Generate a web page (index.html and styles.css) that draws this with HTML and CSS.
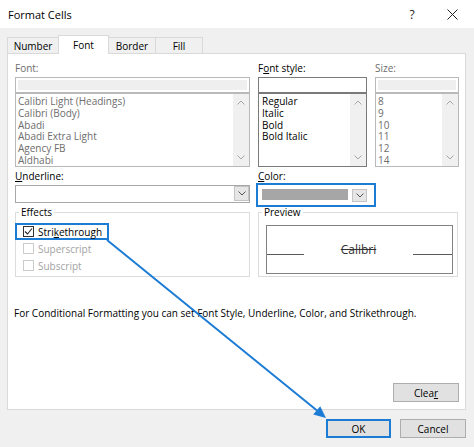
FILE: index.html
```html
<!DOCTYPE html>
<html>
<head>
<meta charset="utf-8">
<link rel="stylesheet" href="styles.css">
</head>
<body>
<div class="window">
  <div class="titlebar">
    <span class="title">Format Cells</span>
    <span class="tb-btn tb-help">?</span>
    <span class="tb-btn tb-close">
      <svg width="11" height="11" viewBox="0 0 11 11"><path d="M0.5 0.5 L10.5 10.5 M10.5 0.5 L0.5 10.5" stroke="#222" stroke-width="1" fill="none"/></svg>
    </span>
  </div>

  <div class="tabs">
    <div class="tab t-number">Number</div>
    <div class="tab active t-font">Font</div>
    <div class="tab t-border">Border</div>
    <div class="tab t-fill">Fill</div>
  </div>

  <div class="panel">
    <div class="top-row">
      <div class="col">
        <div class="label dis">Font:</div>
        <div class="input dis"></div>
        <div class="list dis">
          <div class="items">
            <div>Calibri Light (Headings)</div>
            <div>Calibri (Body)</div>
            <div>Abadi</div>
            <div>Abadi Extra Light</div>
            <div>Agency FB</div>
            <div>Aldhabi</div>
          </div>
          <div class="scroll">
            <div class="sarrow"><svg width="8" height="5" viewBox="0 0 8 5"><polyline points="0.5,4.5 4,1 7.5,4.5" fill="none" stroke="#a6a6a6"/></svg></div>
            <div class="sarrow"><svg width="8" height="5" viewBox="0 0 8 5"><polyline points="0.5,0.5 4,4 7.5,0.5" fill="none" stroke="#a6a6a6"/></svg></div>
          </div>
        </div>
      </div>
      <div class="col">
        <div class="label">F<u>o</u>nt style:</div>
        <div class="input"></div>
        <div class="list">
          <div class="items">
            <div>Regular</div>
            <div>Italic</div>
            <div>Bold</div>
            <div>Bold Italic</div>
          </div>
          <div class="scroll">
            <div class="sarrow"><svg width="8" height="5" viewBox="0 0 8 5"><polyline points="0.5,4.5 4,1 7.5,4.5" fill="none" stroke="#a6a6a6"/></svg></div>
            <div class="sarrow"><svg width="8" height="5" viewBox="0 0 8 5"><polyline points="0.5,0.5 4,4 7.5,0.5" fill="none" stroke="#a6a6a6"/></svg></div>
          </div>
        </div>
      </div>
      <div class="col">
        <div class="label dis">Size:</div>
        <div class="input dis"></div>
        <div class="list dis">
          <div class="items">
            <div>8</div>
            <div>9</div>
            <div>10</div>
            <div>11</div>
            <div>12</div>
            <div>14</div>
          </div>
          <div class="scroll">
            <div class="sarrow"><svg width="8" height="5" viewBox="0 0 8 5"><polyline points="0.5,4.5 4,1 7.5,4.5" fill="none" stroke="#a6a6a6"/></svg></div>
            <div class="sarrow"><svg width="8" height="5" viewBox="0 0 8 5"><polyline points="0.5,0.5 4,4 7.5,0.5" fill="none" stroke="#a6a6a6"/></svg></div>
          </div>
        </div>
      </div>
    </div>

    <div class="mid-row">
      <div class="col">
        <div class="label"><u>U</u>nderline:</div>
        <div class="combo">
          <div class="dd"><svg width="8" height="5" viewBox="0 0 8 5"><polyline points="0.5,0.5 4,4 7.5,0.5" fill="none" stroke="#555"/></svg></div>
        </div>
      </div>
      <div class="col">
        <div class="label"><u>C</u>olor:</div>
        <div class="color-wrap">
          <div class="color-bar"></div>
          <div class="dd dd-color"><svg width="8" height="5" viewBox="0 0 8 5"><polyline points="0.5,0.5 4,4 7.5,0.5" fill="none" stroke="#555"/></svg></div>
        </div>
      </div>
    </div>

    <div class="groups">
      <fieldset class="group effects">
        <legend>Effects</legend>
        <div class="check-row hl">
          <span class="cbox on"><svg width="9" height="9" viewBox="0 0 9 9"><polyline points="1,4.5 3.5,7 8,1.5" fill="none" stroke="#222" stroke-width="1.1"/></svg></span>
          <span>Stri<u>k</u>ethrough</span>
        </div>
        <div class="check-row off">
          <span class="cbox"></span>
          <span>Superscript</span>
        </div>
        <div class="check-row off">
          <span class="cbox"></span>
          <span>Subscript</span>
        </div>
      </fieldset>
      <fieldset class="group preview">
        <legend>Preview</legend>
        <div class="pv-box">
          <div class="pv-line"></div>
          <div class="pv-text">Calibri</div>
          <div class="pv-line pv-right"></div>
        </div>
      </fieldset>
    </div>

    <p class="note">For Conditional Formatting you can set Font Style, Underline, Color, and Strikethrough.</p>

    <div class="clear-row">
      <button class="btn btn-clear">Clea<u>r</u></button>
    </div>
  </div>

  <div class="footer">
    <button class="btn btn-ok">OK</button>
    <button class="btn btn-cancel">Cancel</button>
  </div>

  <svg class="arrow" width="474" height="447" viewBox="0 0 474 447">
    <line x1="107" y1="240" x2="317" y2="410.5" stroke="#1c7cd5" stroke-width="2"/>
    <polygon points="326,418 313.2,414.6 320.2,406.2" fill="#1c7cd5"/>
  </svg>
</div>
</body>
</html>
```

FILE: styles.css
```css
body {
  margin: 0;
  font-family: "Open Sans", "Noto Sans", sans-serif;
  font-size: 10px;
  color: #000;
}

.window {
  position: relative;
  width: 474px;
  height: 447px;
  background: #f0f0f0;
  overflow: hidden;
}

/* title bar */
.titlebar {
  height: 28px;
  background: #fff;
  display: flex;
  align-items: center;
  padding-left: 8px;
  padding-right: 12px;
  gap: 20px;
}
.title {
  flex: 1;
  font-size: 11px;
}
.tb-btn {
  width: 20px;
  display: flex;
  justify-content: center;
  align-items: center;
}
.tb-help {
  font-size: 12px;
  color: #222;
}

/* tabs */
.tabs {
  display: flex;
  align-items: flex-end;
  height: 25px;
  padding-left: 7px;
}
.tab {
  height: 16px;
  box-sizing: border-box;
  border: 1px solid #d9d9d9;
  border-bottom: none;
  margin-left: -1px;
  display: flex;
  align-items: center;
  justify-content: center;
  background: #f0f0f0;
}
.tab:first-child { margin-left: 0; }
.t-number { width: 52px; }
.t-font { width: 51px; }
.t-border { width: 48px; }
.t-fill { width: 48px; }
.tab.active {
  height: 19px;
  background: #fff;
  margin-bottom: -1px;
  position: relative;
  z-index: 1;
}

/* panel */
.panel {
  margin-left: 7px;
  width: 459px;
  height: 357px;
  box-sizing: border-box;
  border: 1px solid #d9d9d9;
  background: #fff;
  padding: 6px 6px 7px 7px;
  display: flex;
  flex-direction: column;
}

.label {
  height: 16px;
  line-height: 16px;
  margin-bottom: 1px;
}
.dis { color: #6d6d6d; }

.top-row {
  display: grid;
  grid-template-columns: 235px 109px 84px;
  column-gap: 8px;
}

.input {
  height: 16px;
  box-sizing: border-box;
  border: 1px solid #7a7a7a;
  background: #fff;
}
.input.dis {
  border-color: #b9b9b9;
  background: #efefef;
  box-shadow: inset 0 0 0 2px #fff;
}

.list {
  height: 74px;
  box-sizing: border-box;
  border: 1px solid #7a7a7a;
  display: flex;
  background: #fff;
}
.list.dis { border-color: #b9b9b9; }
.items {
  flex: 1;
  padding: 2px 0 0 3px;
  line-height: 11.8px;
  overflow: hidden;
}
.list.dis .items { padding-left: 2px; }
.scroll {
  width: 16px;
  background: #f0f0f0;
  display: flex;
  flex-direction: column;
  justify-content: space-between;
}
.sarrow {
  height: 17px;
  display: flex;
  align-items: center;
  justify-content: center;
}

/* underline / color */
.mid-row {
  display: grid;
  grid-template-columns: 235px 1fr;
  column-gap: 8px;
  margin-top: 1px;
}
.combo {
  height: 18px;
  box-sizing: border-box;
  border: 1px solid #a8a8a8;
  background: #fff;
  display: flex;
  justify-content: flex-end;
  align-items: flex-start;
}
.dd {
  width: 15px;
  height: 15px;
  box-sizing: border-box;
  border: 1px solid #c4c4c4;
  background: #e6e6e6;
  display: flex;
  align-items: center;
  justify-content: center;
}
.color-wrap {
  width: 120px;
  height: 24px;
  box-sizing: border-box;
  margin: -2px 0 -2px -2px;
  border: 2px solid #1c7cd5;
  background: #fff;
  display: flex;
  align-items: center;
  padding: 0 7px 0 4px;
}
.color-bar {
  flex: 1;
  height: 11px;
  background: #a6a6a6;
  margin-right: 4px;
  margin-top: -1px;
}
.dd-color {
  height: 13px;
}

/* groups */
.groups {
  display: flex;
  gap: 8px;
}
.group {
  margin: 0;
  padding: 4px 0 2px 0;
  border: 1px solid #dcdcdc;
  min-width: 0;
  box-sizing: border-box;
}
.group legend {
  padding: 0 2px;
  margin-left: 3px;
  line-height: 14px;
  height: 14px;
}
.effects { width: 235px; }
.preview { width: 200px; }

.check-row {
  height: 17px;
  box-sizing: border-box;
  border: 2px solid transparent;
  display: flex;
  align-items: center;
  padding: 0 5px 0 6px;
  width: fit-content;
  margin-left: -1px;
}
.check-row.hl { border-color: #1c7cd5; }
.check-row.off { color: #a3a3a3; }
.cbox {
  width: 11px;
  height: 11px;
  box-sizing: border-box;
  border: 1px solid #333;
  background: #fff;
  margin-right: 4px;
  display: flex;
  align-items: center;
  justify-content: center;
}
.check-row.off .cbox { border-color: #cccccc; }

.pv-box {
  margin: 2px 0 0 7px;
  width: 187px;
  height: 49px;
  box-sizing: border-box;
  border: 1px solid #828282;
  display: flex;
  align-items: center;
  justify-content: space-between;
}
.pv-line {
  width: 37px;
  height: 1px;
  background: #5a5a5a;
  margin-top: 9px;
}
.pv-right { width: 39px; }
.pv-text {
  font-size: 12px;
  color: #333;
  text-decoration: line-through;
}

.note {
  margin: 29px 0 0 -1px;
  line-height: 14px;
}

.clear-row {
  margin-top: auto;
  display: flex;
  justify-content: flex-end;
}

.btn {
  height: 19px;
  box-sizing: border-box;
  border: 1px solid #adadad;
  background: #e1e1e1;
  font-family: inherit;
  font-size: 10px;
  color: #000;
  padding: 0;
}
.btn-clear { width: 66px; }

.footer {
  display: flex;
  justify-content: flex-end;
  gap: 9px;
  padding-right: 8px;
  margin-top: 9px;
}
.btn-ok {
  width: 65px;
  border: 2px solid #1c7cd5;
}
.btn-cancel { width: 66px; }

.arrow {
  position: absolute;
  left: 0;
  top: 0;
  pointer-events: none;
}
```
